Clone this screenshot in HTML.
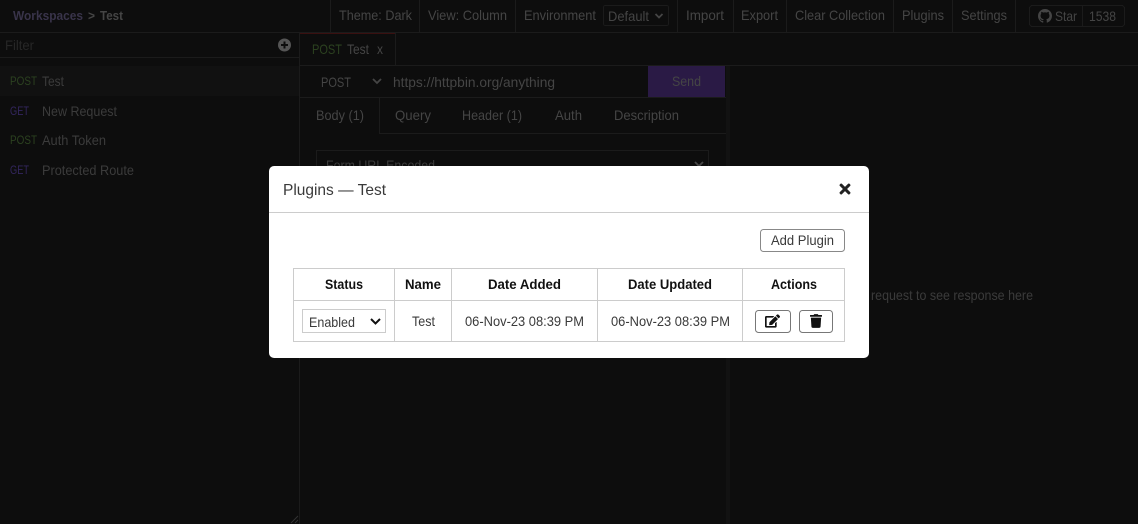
<!DOCTYPE html>
<html><head><meta charset="utf-8"><title>Plugins</title>
<style>
html,body{margin:0;padding:0;background:#0d0d0d;width:1138px;height:524px;overflow:hidden}
svg{display:block;font-family:"Liberation Sans",sans-serif}
.t{fill:#454545;font-size:14px}
.n{fill:#3b3b3b;font-size:14px}
.p{fill:#2c4220;font-size:12px}
.g{fill:#33265e;font-size:12px}
.l{stroke:#1b1b1b;stroke-width:1;fill:none;shape-rendering:crispEdges}
.m{stroke:#ccc;stroke-width:1;fill:none;shape-rendering:crispEdges}
.d{fill:#3a3a3a;font-size:14px}
.b{fill:#111;font-size:14px;font-weight:bold}
</style></head><body>
<svg width="1138" height="524" viewBox="0 0 1138 524" xmlns="http://www.w3.org/2000/svg">
<rect width="1138" height="524" fill="#0d0d0d"/>
<rect x="0" y="66" width="299" height="30" fill="#111"/>
<rect x="726" y="66" width="4" height="458" fill="#121212"/>

<path class="l" d="M0 32.5H1138M330.5 0V32M419.5 0V32M515.5 0V32M677.5 0V32M733.5 0V32M786.5 0V32M893.5 0V32M952.5 0V32M1015.5 0V32M0 57.5H299M299.5 33V524M300 65.5H1138M300 97.5H726M395.5 33V65M379.5 97V133M379 133.5H726"/>
<path d="M300 33.5H395" stroke="#3a1010" stroke-width="1" shape-rendering="crispEdges"/>

<text x="13" y="20" textLength="70" lengthAdjust="spacingAndGlyphs" font-size="13" font-weight="bold" fill="#39344a">Workspaces</text>
<text x="88" y="20" textLength="7" lengthAdjust="spacingAndGlyphs" font-size="13" font-weight="bold" fill="#454545">&gt;</text>
<text x="100" y="20" textLength="23" lengthAdjust="spacingAndGlyphs" font-size="13" font-weight="bold" fill="#454545">Test</text>
<text class="t" x="339" y="20" textLength="73" lengthAdjust="spacingAndGlyphs">Theme: Dark</text>
<text class="t" x="428" y="20" textLength="79" lengthAdjust="spacingAndGlyphs">View: Column</text>
<text class="t" x="524" y="20" textLength="72" lengthAdjust="spacingAndGlyphs">Environment</text>
<rect class="l" x="603.5" y="5.5" width="65" height="20" rx="2"/>
<text class="t" x="608" y="21" textLength="41" lengthAdjust="spacingAndGlyphs">Default</text>
<path d="M655.500 14l3.500 3.500 3.500-3.500" stroke="#454545" stroke-width="1.800" fill="none"/>
<text class="t" x="686" y="20" textLength="38" lengthAdjust="spacingAndGlyphs">Import</text>
<text class="t" x="741" y="20" textLength="37" lengthAdjust="spacingAndGlyphs">Export</text>
<text class="t" x="795" y="20" textLength="90" lengthAdjust="spacingAndGlyphs">Clear Collection</text>
<text class="t" x="902" y="20" textLength="42" lengthAdjust="spacingAndGlyphs">Plugins</text>
<text class="t" x="961" y="20" textLength="46" lengthAdjust="spacingAndGlyphs">Settings</text>
<rect class="l" x="1029.5" y="5.5" width="95" height="21" rx="3"/>
<path class="l" d="M1082.5 6V26"/>
<svg x="1038" y="9" width="14" height="14" viewBox="0 0 16 16"><path fill="#454545" d="M8 0C3.58 0 0 3.58 0 8c0 3.54 2.29 6.53 5.47 7.59.4.07.55-.17.55-.38 0-.19-.01-.82-.01-1.49-2.01.37-2.53-.49-2.69-.94-.09-.23-.48-.94-.82-1.13-.28-.15-.68-.52-.01-.53.63-.01 1.08.58 1.23.82.72 1.21 1.87.87 2.33.66.07-.52.28-.87.51-1.07-1.78-.2-3.64-.89-3.64-3.95 0-.87.31-1.59.82-2.15-.08-.2-.36-1.02.08-2.12 0 0 .67-.21 2.2.82.64-.18 1.32-.27 2-.27.68 0 1.36.09 2 .27 1.53-1.04 2.2-.82 2.2-.82.44 1.1.16 1.92.08 2.12.51.56.82 1.27.82 2.15 0 3.07-1.87 3.75-3.65 3.95.29.25.54.73.54 1.48 0 1.07-.01 1.93-.01 2.2 0 .21.15.46.55.38A8.013 8.013 0 0016 8c0-4.42-3.58-8-8-8z"/></svg>
<text class="t" x="1055" y="21" textLength="22" lengthAdjust="spacingAndGlyphs">Star</text>
<text class="t" x="1089" y="21" textLength="27" lengthAdjust="spacingAndGlyphs">1538</text>

<text x="5" y="50" textLength="29" lengthAdjust="spacingAndGlyphs" font-size="14" fill="#272727">Filter</text>
<circle cx="284.5" cy="45" r="6.5" fill="#555"/>
<path d="M284.5 41.500V48.500M281 45H288" stroke="#0d0d0d" stroke-width="2"/>

<text class="p" x="10" y="85" textLength="27" lengthAdjust="spacingAndGlyphs">POST</text>
<text class="n" x="42" y="86" textLength="22" lengthAdjust="spacingAndGlyphs">Test</text>
<text class="g" x="10" y="115" textLength="19" lengthAdjust="spacingAndGlyphs">GET</text>
<text class="n" x="42" y="116" textLength="75" lengthAdjust="spacingAndGlyphs">New Request</text>
<text class="p" x="10" y="144" textLength="27" lengthAdjust="spacingAndGlyphs">POST</text>
<text class="n" x="42" y="145" textLength="64" lengthAdjust="spacingAndGlyphs">Auth Token</text>
<text class="g" x="10" y="174" textLength="19" lengthAdjust="spacingAndGlyphs">GET</text>
<text class="n" x="42" y="175" textLength="92" lengthAdjust="spacingAndGlyphs">Protected Route</text>
<path d="M291 523l7-7M295 523l3-3" stroke="#333" stroke-width="1" fill="none"/>

<text x="312" y="54" textLength="30" lengthAdjust="spacingAndGlyphs" font-size="14" fill="#2c4220">POST</text>
<text class="t" x="347" y="54" textLength="22" lengthAdjust="spacingAndGlyphs">Test</text>
<text class="t" x="377" y="54" textLength="6" lengthAdjust="spacingAndGlyphs">x</text>

<text class="t" x="321" y="87" textLength="30" lengthAdjust="spacingAndGlyphs">POST</text>
<path d="M373 79l4 4 4-4" stroke="#454545" stroke-width="1.800" fill="none"/>
<text class="t" x="393" y="87" textLength="162" lengthAdjust="spacingAndGlyphs">https://httpbin.org/anything</text>
<rect x="648" y="66" width="77" height="31" fill="#2a1a45"/>
<text class="t" x="672" y="86" textLength="29" lengthAdjust="spacingAndGlyphs">Send</text>

<text class="t" x="316" y="120" textLength="48" lengthAdjust="spacingAndGlyphs">Body (1)</text>
<text class="t" x="395" y="120" textLength="36" lengthAdjust="spacingAndGlyphs">Query</text>
<text class="t" x="462" y="120" textLength="60" lengthAdjust="spacingAndGlyphs">Header (1)</text>
<text class="t" x="555" y="120" textLength="27" lengthAdjust="spacingAndGlyphs">Auth</text>
<text class="t" x="614" y="120" textLength="65" lengthAdjust="spacingAndGlyphs">Description</text>

<rect class="l" x="316.5" y="150.5" width="392" height="40"/>
<text class="n" x="326" y="170" textLength="109" lengthAdjust="spacingAndGlyphs">Form URL Encoded</text>
<path d="M695 162l4 4 4-4" stroke="#454545" stroke-width="1.800" fill="none"/>
<text class="n" x="871" y="300" textLength="162" lengthAdjust="spacingAndGlyphs">request to see response here</text>

<rect x="269" y="166" width="600" height="192" rx="5" fill="#fff"/>
<path class="m" d="M269 212.5H869"/>
<text x="283" y="195" textLength="103" lengthAdjust="spacingAndGlyphs" font-size="16" fill="#3a3a3a">Plugins — Test</text>
<svg x="839" y="181" width="12" height="16" viewBox="0 0 352 512"><path fill="#222" d="M242.72 256l100.07-100.07c12.28-12.28 12.28-32.19 0-44.48l-22.24-22.24c-12.28-12.28-32.19-12.28-44.48 0L176 189.28 75.93 89.21c-12.28-12.28-32.19-12.28-44.48 0L9.21 111.45c-12.28 12.28-12.28 32.19 0 44.48L109.28 256 9.21 356.07c-12.28 12.28-12.28 32.19 0 44.48l22.24 22.24c12.28 12.28 32.2 12.28 44.48 0L176 322.72l100.07 100.07c12.28 12.28 32.2 12.28 44.48 0l22.24-22.24c12.28-12.28 12.28-32.19 0-44.48L242.72 256z"/></svg>

<rect x="760.5" y="229.5" width="84" height="22" rx="3" fill="#fff" stroke="#888"/>
<text class="d" x="771" y="245" textLength="63" lengthAdjust="spacingAndGlyphs">Add Plugin</text>

<path class="m" d="M293.5 268.5H844.5V341.5H293.5ZM293 300.5H845M394.5 268V342M451.5 268V342M597.5 268V342M742.5 268V342"/>
<text class="b" x="325" y="289" textLength="38" lengthAdjust="spacingAndGlyphs">Status</text>
<text class="b" x="405" y="289" textLength="36" lengthAdjust="spacingAndGlyphs">Name</text>
<text class="b" x="488" y="289" textLength="73" lengthAdjust="spacingAndGlyphs">Date Added</text>
<text class="b" x="628" y="289" textLength="84" lengthAdjust="spacingAndGlyphs">Date Updated</text>
<text class="b" x="771" y="289" textLength="46" lengthAdjust="spacingAndGlyphs">Actions</text>

<rect class="m" x="302.5" y="309.5" width="83" height="23"/>
<text class="d" x="309" y="327" textLength="46" lengthAdjust="spacingAndGlyphs">Enabled</text>
<path d="M371 319l4.500 4.500 4.500-4.500" stroke="#111" stroke-width="2" fill="none"/>
<text class="d" x="412" y="326" textLength="23" lengthAdjust="spacingAndGlyphs">Test</text>
<text class="d" x="465" y="326" textLength="119" lengthAdjust="spacingAndGlyphs">06-Nov-23 08:39 PM</text>
<text class="d" x="611" y="326" textLength="119" lengthAdjust="spacingAndGlyphs">06-Nov-23 08:39 PM</text>

<rect x="755.500" y="310.500" width="35" height="22" rx="3" fill="#fff" stroke="#777"/>
<rect x="799.500" y="310.500" width="33" height="22" rx="3" fill="#fff" stroke="#777"/>
<svg x="765" y="314" width="15" height="14" viewBox="0 0 576 512"><path fill="#111" d="M402.6 83.2l90.2 90.2c3.8 3.8 3.8 10 0 13.8L274.4 405.6l-92.8 10.3c-12.4 1.400-22.900-9.100-21.500-21.500l10.300-92.800L388.800 83.200c3.800-3.800 10-3.800 13.800 0zm162-22.900l-48.800-48.800c-15.200-15.200-39.900-15.200-55.200 0l-35.400 35.400c-3.800 3.800-3.800 10 0 13.800l90.200 90.200c3.800 3.800 10 3.800 13.800 0l35.400-35.400c15.200-15.300 15.200-40 0-55.200zM384 346.200V448H64V128h229.800c3.200 0 6.200-1.300 8.500-3.500l40-40c7.600-7.600 2.200-20.500-8.500-20.500H48C21.500 64 0 85.500 0 112v352c0 26.500 21.500 48 48 48h352c26.500 0 48-21.500 48-48V306.200c0-10.700-12.900-16-20.500-8.500l-40 40c-2.200 2.300-3.500 5.300-3.500 8.500z"/></svg>
<svg x="810" y="314" width="12" height="14" viewBox="0 0 448 512"><path fill="#111" d="M432 32H312l-9.400-18.700A24 24 0 0 0 281.100 0H166.800a23.720 23.720 0 0 0-21.400 13.300L136 32H16A16 16 0 0 0 0 48v32a16 16 0 0 0 16 16h416a16 16 0 0 0 16-16V48a16 16 0 0 0-16-16zM53.200 467a48 48 0 0 0 47.900 45h245.800a48 48 0 0 0 47.900-45L416 128H32z"/></svg>
</svg>
</body></html>
